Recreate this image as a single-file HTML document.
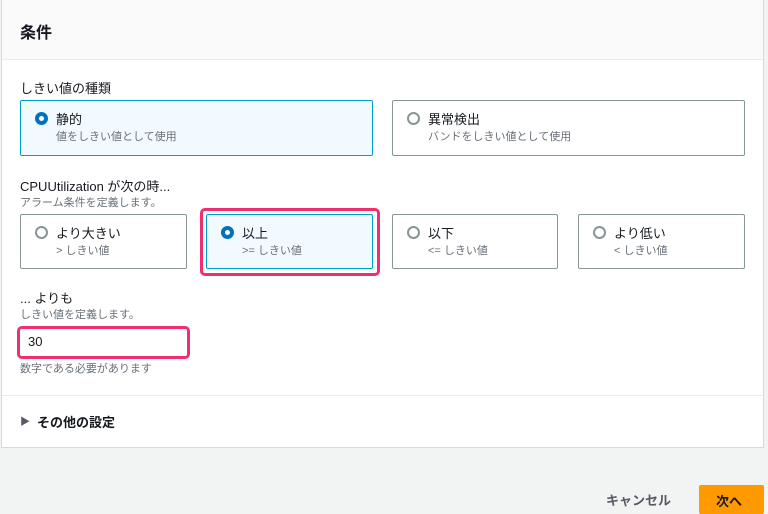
<!DOCTYPE html>
<html><head><meta charset="utf-8"><style>
*{box-sizing:border-box;margin:0;padding:0}
body{width:768px;height:514px;background:#f2f3f3;font-family:"Liberation Sans","Noto Sans CJK JP",sans-serif;color:#16191f;position:relative;overflow:hidden}
.card{position:absolute;left:1px;top:0;width:763px;height:448px;background:#fff;border:1px solid #d5dbdb;border-top:none}
.hdr{position:absolute;left:0;top:0;width:100%;height:60px;background:#fafafa;border-bottom:1px solid #eaeded}
.a{position:absolute;white-space:nowrap}
.t{font-size:16px;font-weight:bold}
.l{font-size:13px}
.s{font-size:11px;color:#687078}
.box{position:absolute;border:1px solid #879596;border-radius:2px;background:#fff}
.sel{background:#f1faff;border-color:#00a1c9}
.r{position:absolute;width:13px;height:13px;border-radius:50%;border:2px solid #879596;background:#fff}
.r.on{border:4px solid #0073bb}
.pink{position:absolute;border:3px solid #f0306e;border-radius:5px}
</style></head><body>
<div class="card">
<div class="hdr"></div>
</div>
<div class="a t" style="left:20px;top:19px">条件</div>
<div class="a l" style="left:20px;top:78px">しきい値の種類</div>
<div class="box sel" style="left:20px;top:100px;width:353px;height:56px"></div>
<div class="r on" style="left:35px;top:112px"></div>
<div class="a l" style="left:56px;top:109px">静的</div>
<div class="a s" style="left:56px;top:128px">値をしきい値として使用</div>
<div class="box" style="left:392px;top:100px;width:353px;height:56px"></div>
<div class="r" style="left:407px;top:112px"></div>
<div class="a l" style="left:428px;top:109px">異常検出</div>
<div class="a s" style="left:428px;top:128px">バンドをしきい値として使用</div>

<div class="a l" style="left:20px;top:176px">CPUUtilization が次の時...</div>
<div class="a s" style="left:20px;top:194px">アラーム条件を定義します。</div>

<div class="box" style="left:20px;top:214px;width:167px;height:55px"></div>
<div class="r" style="left:35px;top:226px"></div>
<div class="a l" style="left:56px;top:223px">より大きい</div>
<div class="a s" style="left:56px;top:242px">&gt; しきい値</div>

<div class="pink" style="left:200px;top:208px;width:180px;height:68px"></div>
<div class="box sel" style="left:206px;top:214px;width:167px;height:55px"></div>
<div class="r on" style="left:221px;top:226px"></div>
<div class="a l" style="left:242px;top:223px">以上</div>
<div class="a s" style="left:242px;top:242px">&gt;= しきい値</div>

<div class="box" style="left:392px;top:214px;width:166px;height:55px"></div>
<div class="r" style="left:407px;top:226px"></div>
<div class="a l" style="left:428px;top:223px">以下</div>
<div class="a s" style="left:428px;top:242px">&lt;= しきい値</div>

<div class="box" style="left:578px;top:214px;width:167px;height:55px"></div>
<div class="r" style="left:593px;top:226px"></div>
<div class="a l" style="left:614px;top:223px">より低い</div>
<div class="a s" style="left:614px;top:242px">&lt; しきい値</div>

<div class="a l" style="left:20px;top:288px">... よりも</div>
<div class="a s" style="left:20px;top:306px">しきい値を定義します。</div>
<div class="pink" style="left:17px;top:326px;width:173px;height:33px"></div>
<div class="a l" style="left:28px;top:334px">30</div>
<div class="a s" style="left:20px;top:360px">数字である必要があります</div>

<div class="a" style="left:2px;top:395px;width:761px;height:1px;background:#eaeded"></div>
<div class="a" style="left:20px;top:413px;font-size:10px;color:#545b64">▶</div>
<div class="a l" style="left:37px;top:412px;font-weight:bold">その他の設定</div>

<div class="a l" style="left:606px;top:490px;font-weight:bold;color:#545b64">キャンセル</div>
<div class="a" style="left:699px;top:485px;width:65px;height:29px;background:#ff9900;border-radius:2px"></div>
<div class="a l" style="left:716px;top:491px;font-weight:bold">次へ</div>
</body></html>
